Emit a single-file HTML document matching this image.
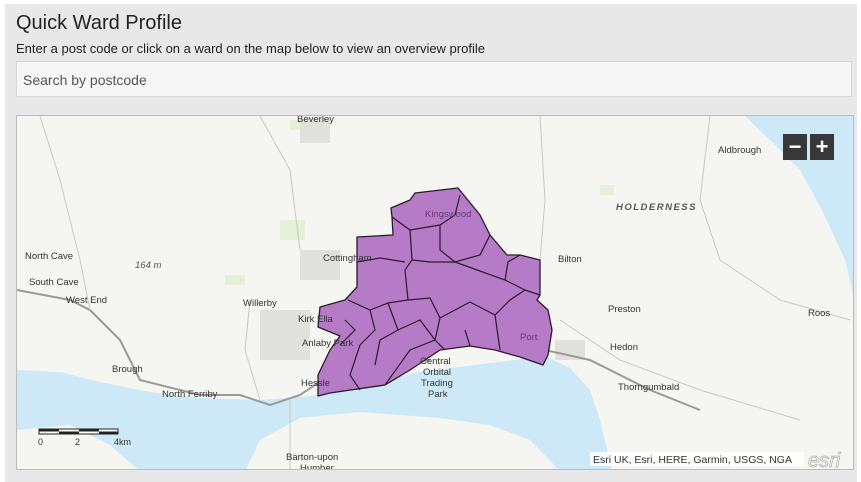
<!DOCTYPE html>
<html><head><meta charset="utf-8"><style>
html,body{margin:0;padding:0;background:#fff;width:861px;height:482px;overflow:hidden;font-family:"Liberation Sans",sans-serif}
.panel{position:absolute;left:5px;top:4px;width:852px;height:478px;background:#e8e8e8}
h1{position:absolute;left:16px;top:12px;margin:0;font-weight:normal;font-size:20px;color:#222}
.sub{position:absolute;left:16px;top:41px;font-size:13px;color:#222}
.search{position:absolute;left:16px;top:61px;width:836px;height:36px;background:#f6f6f6;border:1px solid #d6d6d6;box-sizing:border-box;font-size:14px;color:#555;padding:10px 6px}
.map{position:absolute;left:16px;top:115px;width:838px;height:355px;border:1px solid #bbb;box-sizing:border-box;overflow:hidden;background:#f5f5f1}
.zm{position:absolute;top:134px;width:24px;height:26px;background:#383838;color:#fff;font-size:22px;font-weight:bold;text-align:center;line-height:25px}
</style></head><body>
<div class="panel"></div>
<h1>Quick Ward Profile</h1>
<div class="sub">Enter a post code or click on a ward on the map below to view an overview profile</div>
<div class="search">Search by postcode</div>
<div class="map">
<svg width="838" height="355" viewBox="17 116 838 355" style="position:absolute;left:0;top:0" font-family="Liberation Sans" font-size="10" fill="#333">
<rect x="17" y="116" width="838" height="355" fill="#f5f5f1"/>
<g fill="#e6efd8"><rect x="600" y="185" width="14" height="10"/><rect x="225" y="275" width="20" height="10"/><rect x="290" y="120" width="30" height="10"/><rect x="280" y="220" width="25" height="20"/></g>
<g fill="#e0e0dc"><rect x="300" y="250" width="40" height="30"/><rect x="260" y="310" width="50" height="50"/><rect x="300" y="118" width="30" height="25"/><rect x="555" y="340" width="30" height="20"/></g>
<path d="M745 116 L855 116 L855 300 L845 260 L822 210 L800 170 L770 140 Z" fill="#cde9f7"/>
<path d="M17 370 L60 372 L100 382 L150 392 L200 398 L260 400 L310 396 L330 392 L420 372 L545 356 L570 368 L590 390 L600 420 L612 471 L560 471 L530 440 L490 425 L440 418 L360 412 L300 418 L260 440 L245 471 L140 471 L110 445 L70 425 L17 430 Z" fill="#cde9f7"/>
<g fill="none" stroke="#9a9a9a" stroke-width="2"><path d="M17 290 L70 300 L90 310 L120 340 L140 380 L200 395 L240 395 L270 405 L300 395 L330 375 L430 360"/><path d="M545 350 L590 360 L650 390 L700 410"/></g>
<g fill="none" stroke="#c8c8c8" stroke-width="1"><path d="M40 116 L60 180 L80 260 L90 310"/><path d="M260 116 L290 170 L300 250"/><path d="M540 116 L545 200 L540 260"/><path d="M710 116 L700 200 L720 260 L780 300 L850 320"/><path d="M560 320 L620 360 L700 390 L800 420"/><path d="M250 300 L245 350 L260 400"/><path d="M290 400 L290 471"/></g>
<path d="M318 396 L318 375 L330 350 L340 336 L318 327 L320 307 L345 300 L357 287 L357 237 L393 235 L392 217 L391 208 L410 200 L415 193 L458 188 L480 215 L490 235 L507 255 L520 255 L540 260 L540 295 L537 300 L548 310 L552 330 L548 355 L543 365 L520 357 L495 350 L470 346 L440 350 L410 370 L385 385 L330 393 Z" fill="#b57bc6" stroke="#2a1a2a" stroke-width="1.3" stroke-linejoin="round"/>
<g fill="none" stroke="#2a1a2a" stroke-width="1.2"><path d="M392 217 L410 230 L412 260 L405 270 L408 300 L388 303 L370 310 L348 300"/><path d="M357 262 L380 258 L405 262"/><path d="M410 230 L440 225 L455 215 L460 195"/><path d="M440 225 L440 250 L455 262 L480 255 L490 235"/><path d="M412 260 L430 262 L455 262 L505 280 L525 290"/><path d="M505 280 L508 262 L520 255"/><path d="M525 290 L510 300 L495 315 L500 350"/><path d="M525 290 L540 295"/><path d="M408 300 L430 298 L440 318 L435 340 L445 350"/><path d="M440 318 L470 302 L495 315"/><path d="M370 310 L375 330 L360 345 L350 375 L360 390"/><path d="M388 303 L398 330 L380 340 L375 365"/><path d="M398 330 L420 320 L435 340 L410 350 L385 385"/><path d="M345 320 L355 330 L340 345"/><path d="M465 330 L470 346"/></g>
<g font-size="9.5"><text x="297" y="122">Beverley</text><text x="718" y="153">Aldbrough</text><text x="616" y="210" font-weight="bold" font-style="italic" letter-spacing="1.5" fill="#555">HOLDERNESS</text><text x="25" y="259">North Cave</text><text x="29" y="285">South Cave</text><text x="66" y="303">West End</text><text x="135" y="268" font-style="italic" fill="#555">164 m</text><text x="323" y="261">Cottingham</text><text x="558" y="262">Bilton</text><text x="243" y="306">Willerby</text><text x="298" y="322">Kirk Ella</text><text x="302" y="346">Anlaby Park</text><text x="608" y="312">Preston</text><text x="808" y="316">Roos</text><text x="610" y="350">Hedon</text><text x="112" y="372">Brough</text><text x="162" y="397">North Ferriby</text><text x="301" y="386">Hessle</text><text x="618" y="390">Thorngumbald</text><text x="420" y="364">Central</text><text x="423" y="375">Orbital</text><text x="421" y="386">Trading</text><text x="428" y="397">Park</text><text x="425" y="217" fill="#6a3a7a">Kingswood</text><text x="520" y="340" fill="#6a3a7a">Port</text><text x="286" y="460">Barton-upon</text><text x="300" y="471">Humber</text></g>
<rect x="39" y="429" width="79" height="5" fill="#fff" stroke="#222" stroke-width="1"/><rect x="39" y="429" width="20" height="2.5" fill="#222"/><rect x="79" y="429" width="20" height="2.5" fill="#222"/><rect x="59" y="431.5" width="20" height="2.5" fill="#222"/><rect x="99" y="431.5" width="19" height="2.5" fill="#222"/>
<text x="38" y="445" font-size="9">0</text><text x="75" y="445" font-size="9">2</text><text x="114" y="445" font-size="9">4km</text>
<rect x="590" y="452" width="214" height="14" fill="#fff" opacity="0.8"/><text x="593" y="463" font-size="10.5">Esri UK, Esri, HERE, Garmin, USGS, NGA</text>
<text x="808" y="467" font-size="20" fill="#fff" stroke="#aaa" stroke-width="0.7" font-style="italic">esri</text>
</svg>
</div>
<div class="zm" style="left:783px">−</div>
<div class="zm" style="left:810px">+</div>
</body></html>
